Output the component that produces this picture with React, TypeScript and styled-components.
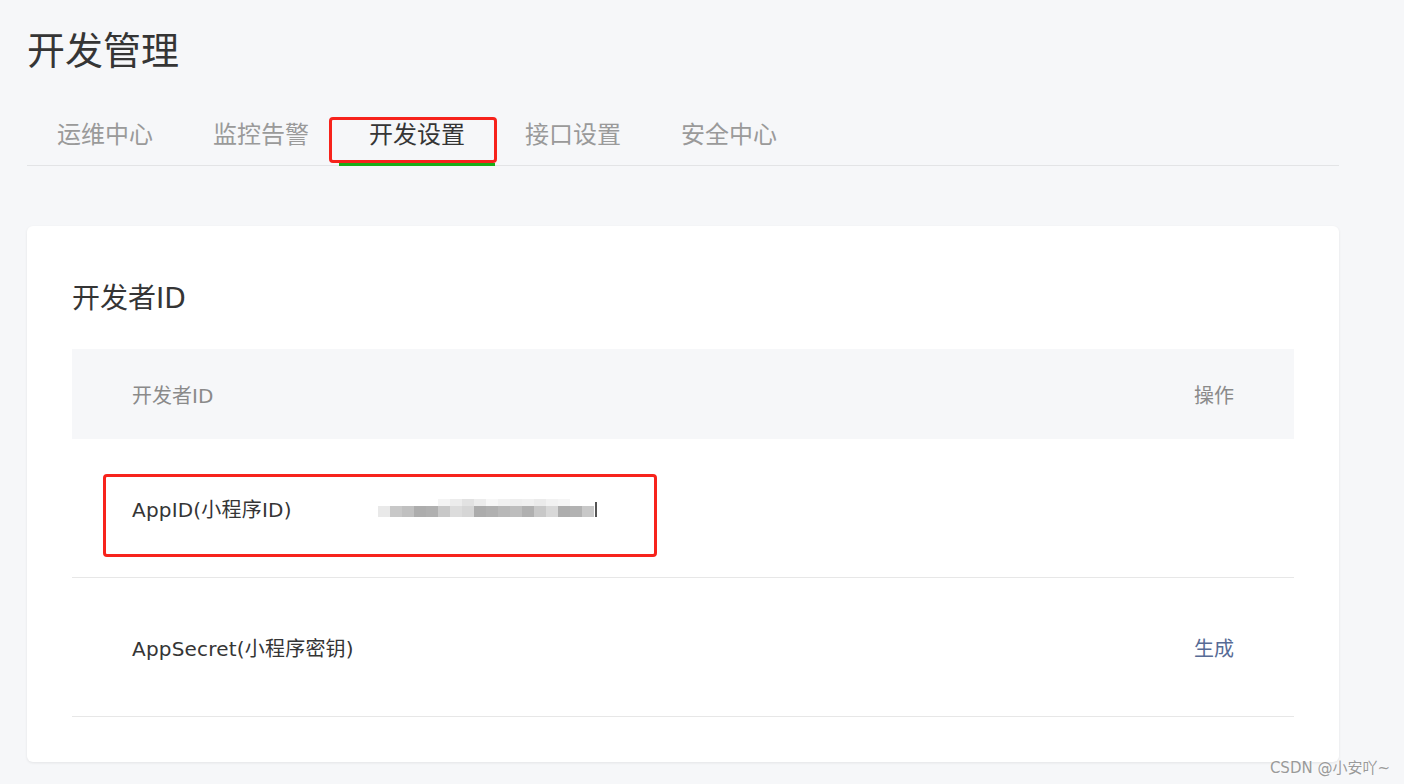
import styled, { createGlobalStyle } from 'styled-components';

const GlobalStyle = createGlobalStyle`
  html, body {
    margin: 0;
    padding: 0;
    background: #f6f7f9;
    font-family: "DejaVu Sans", "Noto Sans CJK SC", sans-serif;
  }
`;

const tabs = ['运维中心', '监控告警', '开发设置', '接口设置', '安全中心'];
const activeTab = 2;

// pixelated (blurred) AppID value
const mosaicTop = [
  '#ffffff', '#ffffff', '#ffffff', '#ffffff', '#ffffff', '#f4f4f4', '#ececec', '#e2e2e2',
  '#ececec', '#f7f7f7', '#f1f1f1', '#eeeeee', '#f0f0f0', '#ebebeb', '#f2f2f2', '#f5f5f5',
  '#ffffff', '#ffffff',
];
const mosaicBottom = [
  '#e9e9e9', '#c8c8c8', '#c0c0c0', '#adadad', '#b0b0b0', '#c8c8c8', '#dcdcdc', '#d6d6d6',
  '#acacac', '#b0b0b0', '#b8b8b8', '#bdbdbd', '#b0b0b0', '#c8c8c8', '#d8d8d8', '#adadad',
  '#b2b2b2', '#c8c8c8',
];

const App = () => {
  return (
    <Page>
      <GlobalStyle />
      <Title>开发管理</Title>
      <TabBar>
        {tabs.map((t, i) => (
          <Tab key={t} $active={i === activeTab}>
            {t}
            {i === activeTab && <TabMark />}
          </Tab>
        ))}
      </TabBar>

      <Card>
        <CardTitle>开发者ID</CardTitle>
        <Table>
          <HeadRow>
            <span>开发者ID</span>
            <span>操作</span>
          </HeadRow>
          <Row>
            <Label>AppID(小程序ID)</Label>
            <Value>
              <Mosaic>
                {mosaicTop.map((c, i) => (
                  <Cell key={'t' + i} style={{ background: c }} />
                ))}
                {mosaicBottom.map((c, i) => (
                  <Cell key={'b' + i} style={{ background: c }} />
                ))}
              </Mosaic>
              <Caret />
            </Value>
            <span />
            <RowMark />
          </Row>
          <Row>
            <Label>AppSecret(小程序密钥)</Label>
            <Value />
            <Action>生成</Action>
          </Row>
        </Table>
      </Card>

      <Watermark>CSDN @小安吖~</Watermark>
    </Page>
  );
};

const Page = styled.div`
  position: relative;
  min-height: 784px;
  box-sizing: border-box;
  padding: 32px 65px 0 27px;
`;

const Title = styled.h1`
  margin: 0;
  font-size: 38px;
  line-height: 38px;
  font-weight: 400;
  color: #353535;
`;

const TabBar = styled.div`
  display: flex;
  margin-top: 38px;
  border-bottom: 1px solid #e3e4e6;
`;

const Tab = styled.div<{ $active: boolean }>`
  position: relative;
  width: 156px;
  box-sizing: border-box;
  padding: 15px 30px 16px;
  margin-bottom: -1px;
  font-size: 24px;
  line-height: 24px;
  color: ${(p) => (p.$active ? '#353535' : '#9a9a9a')};
  border-bottom: 3px solid ${(p) => (p.$active ? '#1aad19' : 'transparent')};
`;

const TabMark = styled.div`
  position: absolute;
  left: -10px;
  top: 9px;
  width: 168px;
  height: 46px;
  box-sizing: border-box;
  border: 3px solid #f7231c;
  border-radius: 4px;
`;

const Card = styled.div`
  margin-top: 60px;
  background: #fff;
  border-radius: 6px;
  box-shadow: 0 1px 3px rgba(0, 0, 0, 0.08);
  padding: 45px;
`;

const CardTitle = styled.h2`
  margin: 3px 0 25px;
  font-size: 28px;
  line-height: 50px;
  font-weight: 400;
  color: #353535;
`;

const Table = styled.div`
  display: flex;
  flex-direction: column;
`;

const HeadRow = styled.div`
  display: flex;
  justify-content: space-between;
  align-items: center;
  height: 90px;
  padding: 0 60px;
  background: #f6f7f9;
  font-size: 20px;
  color: #8a8a8a;
`;

const Row = styled.div`
  position: relative;
  display: grid;
  grid-template-columns: 246px 1fr auto;
  align-items: center;
  height: 138px;
  padding: 0 60px;
  border-bottom: 1px solid #e7e7e7;
  font-size: 20px;
  color: #353535;
`;

const RowMark = styled.div`
  position: absolute;
  left: 31px;
  top: 35px;
  width: 554px;
  height: 83px;
  box-sizing: border-box;
  border: 3px solid #f7231c;
  border-radius: 4px;
`;

const Label = styled.span`
  letter-spacing: 0.2px;
`;

const Value = styled.div`
  display: flex;
  align-items: flex-end;
`;

const Mosaic = styled.div`
  display: grid;
  grid-template-columns: repeat(18, 12px);
  grid-template-rows: 7px 11px;
`;

const Cell = styled.div``;

const Caret = styled.div`
  width: 2px;
  height: 15px;
  background: #555;
  margin-left: 1px;
`;

const Action = styled.span`
  color: #576b95;
`;

const Watermark = styled.div`
  position: absolute;
  right: 14px;
  top: 756px;
  font-size: 15px;
  color: #9a9a9a;
  text-shadow: 0 0 2px #fff;
`;

export default App;
